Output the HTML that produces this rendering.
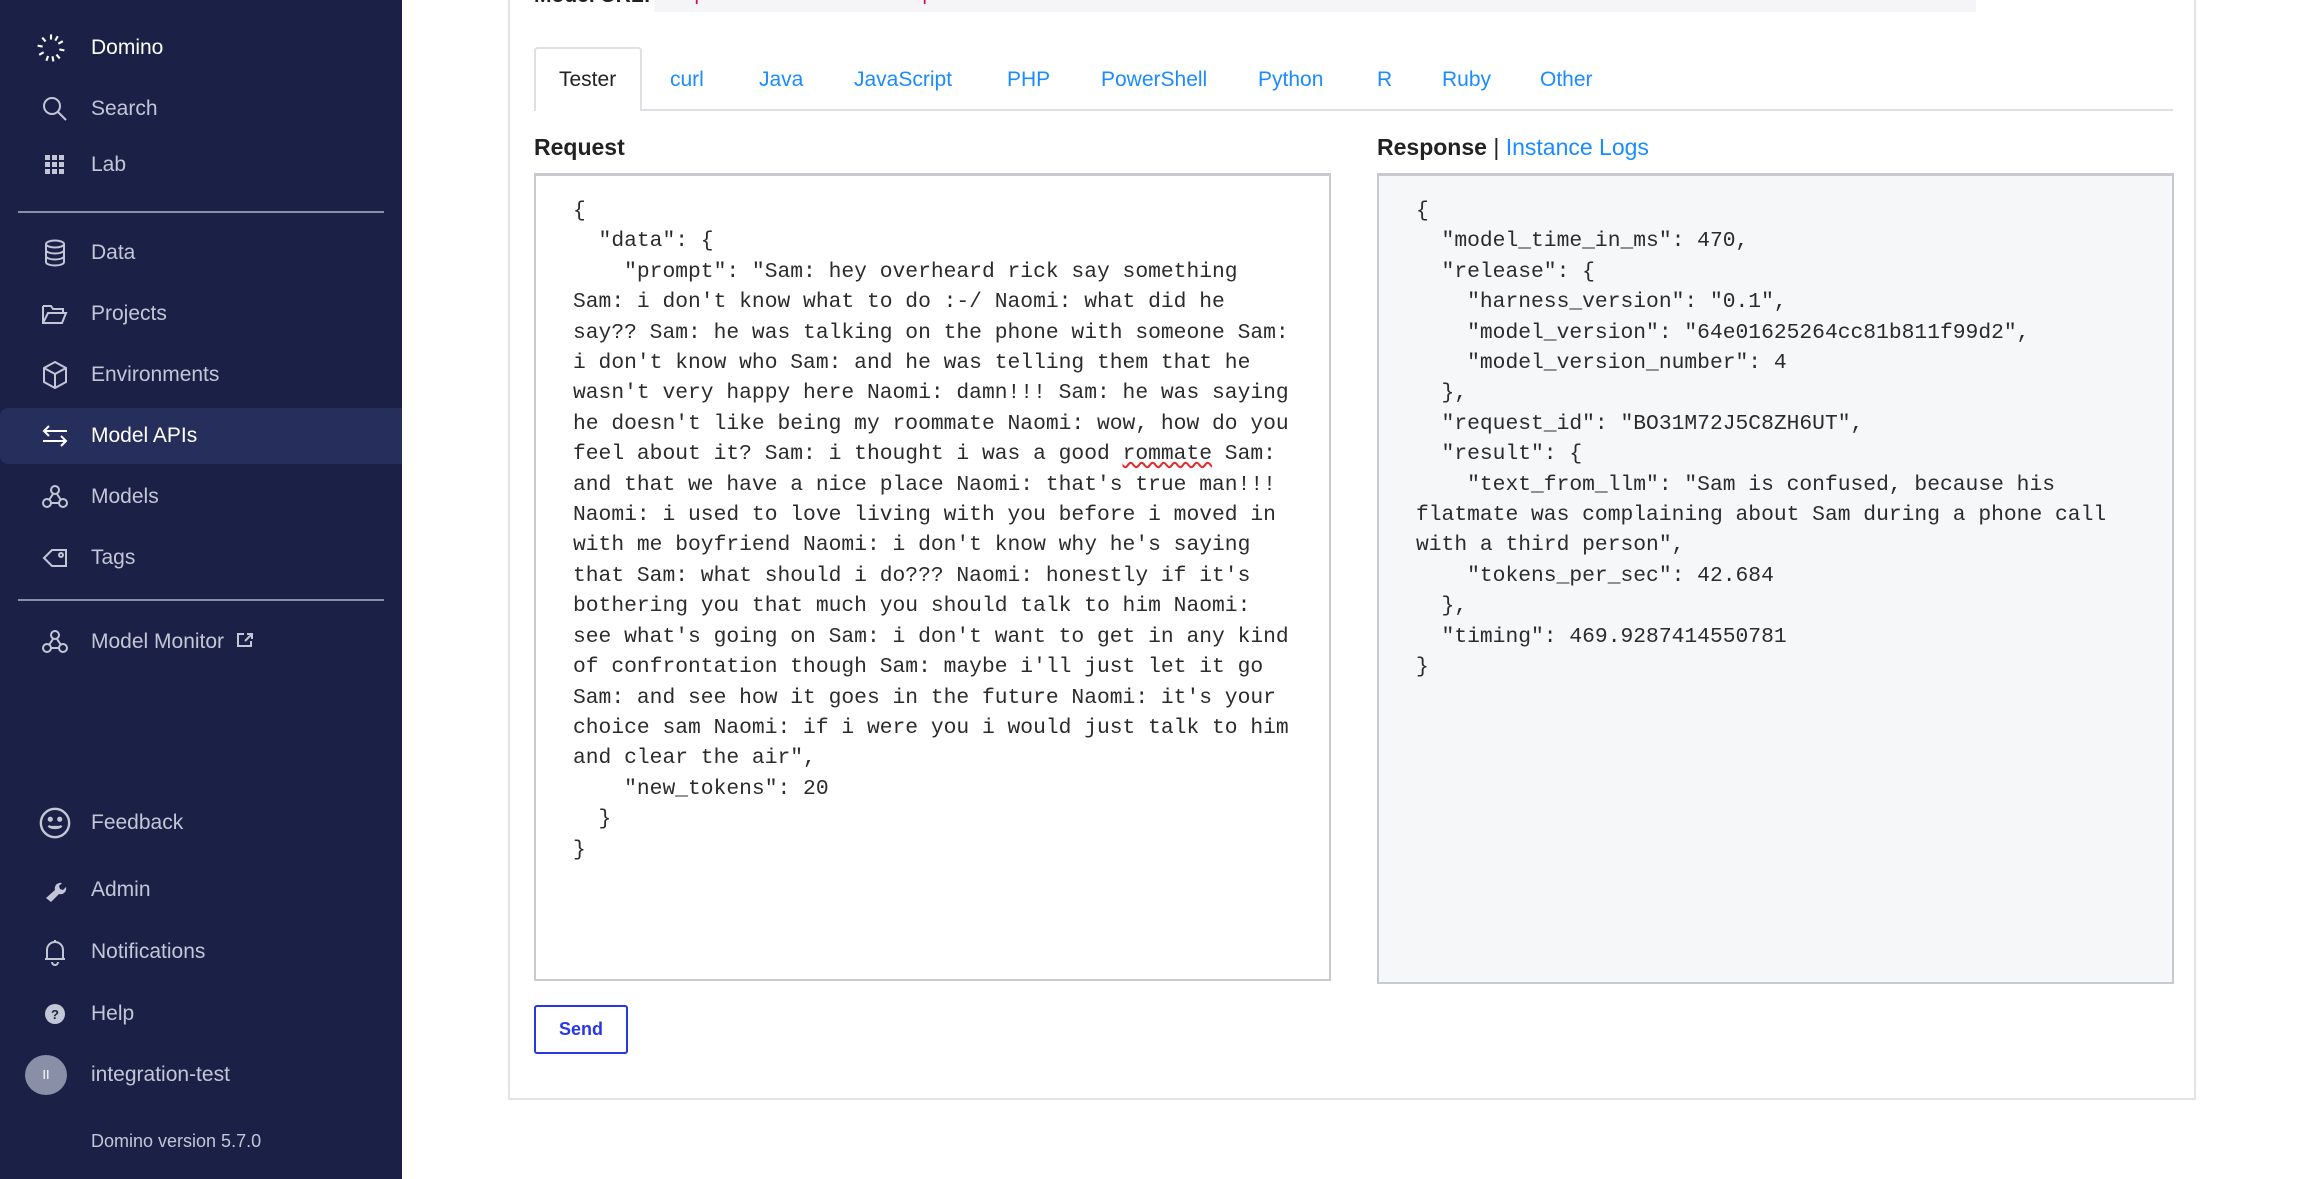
<!DOCTYPE html>
<html><head><meta charset="utf-8"><style>
*{box-sizing:border-box;margin:0;padding:0}
body{width:2304px;height:1179px;overflow:hidden;background:#fff;font-family:"Liberation Sans",sans-serif;position:relative}
#sb{position:absolute;left:0;top:0;width:402px;height:1179px;background:#1b2146}
.it{position:absolute;left:0;width:402px;height:56px;display:flex;align-items:center;color:#c3c6d6;font-size:21px}
.it .ic{position:absolute;left:38px;width:34px;height:34px;display:flex;align-items:center;justify-content:center}
.it span.t{position:absolute;left:91px}
.act{background:#262e5c;color:#fff;border-radius:8px 0 0 8px}
.div{position:absolute;left:18px;width:366px;height:2px;background:#8a8fa8}
svg{stroke:#c3c6d6;fill:none;stroke-width:2}
#card{position:absolute;left:508px;top:-10px;width:1688px;height:1110px;border:2px solid #e1e3e8;border-top:none}
.tab{position:absolute;top:78px;font-size:21px;color:#1a8cff}
pre{font-family:"Liberation Mono",monospace;font-size:21.3px;line-height:30.4px;color:#2b2b2b}
</style></head><body>
<div id="sb">
 <div class="it" style="top:20px;color:#fff;font-size:21px"><div class="ic" style="left:34px"><svg width="40" height="40" viewBox="0 0 40 40" style="stroke:#fff;stroke-width:2.5"><g transform="translate(20 20)"><path d="M0-16v6" transform="rotate(0)"/><path d="M0-16v6" transform="rotate(30)"/><path d="M0-16v6" transform="rotate(60)"/><path d="M0-16v6" transform="rotate(100)"/><path d="M0-16v6" transform="rotate(140)"/><path d="M0-16v6" transform="rotate(170)"/><path d="M0-16v6" transform="rotate(200)"/><path d="M0-16v6" transform="rotate(240)"/><path d="M0-16v6" transform="rotate(280)"/><path d="M0-16v6" transform="rotate(320)"/></g></svg></div><span class="t">Domino</span></div>
 <div class="it" style="top:81px"><div class="ic"><svg width="26" height="26" viewBox="0 0 26 26"><circle cx="10" cy="10" r="8"/><path d="M16 16l8 8"/></svg></div><span class="t">Search</span></div>
 <div class="it" style="top:137px"><div class="ic"><svg width="22" height="22" viewBox="0 0 22 22" style="fill:#c3c6d6;stroke:none"><rect x="1" y="1" width="5" height="5"/><rect x="8" y="1" width="5" height="5"/><rect x="15" y="1" width="5" height="5"/><rect x="1" y="8" width="5" height="5"/><rect x="8" y="8" width="5" height="5"/><rect x="15" y="8" width="5" height="5"/><rect x="1" y="15" width="5" height="5"/><rect x="8" y="15" width="5" height="5"/><rect x="15" y="15" width="5" height="5"/></svg></div><span class="t">Lab</span></div>
 <div class="div" style="top:211px"></div>
 <div class="it" style="top:225px"><div class="ic"><svg width="22" height="28" viewBox="0 0 22 28"><ellipse cx="11" cy="5" rx="9" ry="3.5"/><path d="M2 5v18c0 2 4 3.5 9 3.5s9-1.5 9-3.5V5M2 11c0 2 4 3.5 9 3.5s9-1.5 9-3.5M2 17c0 2 4 3.5 9 3.5s9-1.5 9-3.5"/></svg></div><span class="t">Data</span></div>
 <div class="it" style="top:286px"><div class="ic"><svg width="26" height="22" viewBox="0 0 26 22"><path d="M1 3h8l2 3h10v4M1 3v17h19l4-10H6L1 20"/></svg></div><span class="t">Projects</span></div>
 <div class="it" style="top:347px"><div class="ic"><svg width="26" height="28" viewBox="0 0 26 28"><path d="M13 1l11 6v14l-11 6-11-6V7zM2 7l11 6 11-6M13 13v14"/></svg></div><span class="t">Environments</span></div>
 <div class="it act" style="top:408px"><div class="ic"><svg width="26" height="24" viewBox="0 0 26 24" style="stroke:#fff"><path d="M25 7H2M7 2L2 7l5 5M1 17h23M19 12l5 5-5 5"/></svg></div><span class="t">Model APIs</span></div>
 <div class="it" style="top:469px"><div class="ic"><svg width="26" height="24" viewBox="0 0 26 24"><circle cx="13" cy="5" r="4"/><circle cx="5" cy="18" r="4"/><circle cx="21" cy="18" r="4"/><path d="M11 9l-4 6M15 9l4 6M9 18h8"/></svg></div><span class="t">Models</span></div>
 <div class="it" style="top:530px"><div class="ic"><svg width="26" height="20" viewBox="0 0 26 20"><path d="M2 10l8-8h14v16H10z"/><circle cx="19" cy="7" r="2"/></svg></div><span class="t">Tags</span></div>
 <div class="div" style="top:599px"></div>
 <div class="it" style="top:614px"><div class="ic"><svg width="26" height="24" viewBox="0 0 26 24"><circle cx="13" cy="5" r="4"/><circle cx="5" cy="18" r="4"/><circle cx="21" cy="18" r="4"/><path d="M11 9l-4 6M15 9l4 6M9 18h8"/></svg></div><span class="t">Model Monitor <svg width="18" height="16" viewBox="0 0 18 16" style="margin-left:6px"><path d="M8 2H2v12h13V9M11 2h5v5M16 2l-7 7"/></svg></span></div>
 <div class="it" style="top:795px"><div class="ic"><svg width="36" height="36" viewBox="0 0 36 36" style="stroke-width:2.5"><circle cx="18" cy="18" r="15"/><circle cx="13" cy="14" r="1.5" style="fill:#c3c6d6"/><circle cx="23" cy="14" r="1.5" style="fill:#c3c6d6"/><path d="M11 21c3 3 11 3 14 0" style="fill:#c3c6d6"/></svg></div><span class="t">Feedback</span></div>
 <div class="it" style="top:862px"><div class="ic"><svg width="24" height="24" viewBox="0 0 24 24" style="fill:#c3c6d6;stroke:none"><path d="M3 20l9-8c-1-4 2-8 7-7l-3 3 1 3 3 1 3-3c1 5-3 8-7 7l-8 8z"/></svg></div><span class="t">Admin</span></div>
 <div class="it" style="top:924px"><div class="ic"><svg width="24" height="28" viewBox="0 0 24 28"><path d="M4 21V12a8 8 0 0116 0v9H2h20M9 24a3 3 0 006 0M12 2v2"/></svg></div><span class="t">Notifications</span></div>
 <div class="it" style="top:986px"><div class="ic"><svg width="22" height="22" viewBox="0 0 22 22"><circle cx="11" cy="11" r="10" style="fill:#c3c6d6;stroke:none"/><text x="11" y="16" font-size="13" text-anchor="middle" fill="#1b2146" stroke="none" font-family="Liberation Sans" font-weight="bold">?</text></svg></div><span class="t">Help</span></div>
 <div class="it" style="top:1047px"><div style="position:absolute;left:25px;top:8px;width:42px;height:40px;border-radius:50%;background:#8a8fa8;color:#fff;font-size:13px;text-align:center;line-height:40px">II</div><span class="t">integration-test</span></div>
 <div style="position:absolute;left:91px;top:1131px;color:#c3c6d6;font-size:18px">Domino version 5.7.0</div>
</div>

<div id="card">
 <div style="position:absolute;left:24px;top:0;font-size:21px;font-weight:bold;color:#222;line-height:12px">Model URL:</div>
 <div style="position:absolute;left:144px;top:0;width:1322px;height:22px;background:#f5f5f7;color:#d0104c;font-family:'Liberation Mono',monospace;font-size:20px;line-height:12px;overflow:hidden;white-space:nowrap;padding-left:4px;padding-top:0">https://rev4demo12397.product-team-sandbox.domino.tech:443/models/64d12534264cc81b811f99a2/latest/model</div>
 <div style="position:absolute;left:24px;top:119px;width:1639px;height:2px;background:#dee0e4"></div>
 <div style="position:absolute;left:24px;top:57px;width:108px;height:64px;background:#fff;border:2px solid #dee0e4;border-bottom:none;border-radius:4px 4px 0 0"></div>
 <div class="tab" style="left:49px;color:#222">Tester</div>
 <div class="tab" style="left:160px">curl</div>
 <div class="tab" style="left:249px">Java</div>
 <div class="tab" style="left:344px">JavaScript</div>
 <div class="tab" style="left:497px">PHP</div>
 <div class="tab" style="left:591px">PowerShell</div>
 <div class="tab" style="left:748px">Python</div>
 <div class="tab" style="left:867px">R</div>
 <div class="tab" style="left:932px">Ruby</div>
 <div class="tab" style="left:1030px">Other</div>
 <div style="position:absolute;left:24px;top:144px;font-size:23px;font-weight:bold;color:#222">Request</div>
 <div style="position:absolute;left:867px;top:144px;font-size:23px;color:#222"><b>Response</b> | <span style="color:#1a8cff">Instance Logs</span></div>
 <div style="position:absolute;left:24px;top:183px;width:797px;height:808px;border:2px solid #c8cacf;border-top-width:3px;background:#fff">
<pre style="position:absolute;left:37px;top:20px">{
  "data": {
    "prompt": "Sam: hey overheard rick say something
Sam: i don't know what to do :-/ Naomi: what did he
say?? Sam: he was talking on the phone with someone Sam:
i don't know who Sam: and he was telling them that he
wasn't very happy here Naomi: damn!!! Sam: he was saying
he doesn't like being my roommate Naomi: wow, how do you
feel about it? Sam: i thought i was a good <span style="text-decoration:underline wavy #e03030">rommate</span> Sam:
and that we have a nice place Naomi: that's true man!!!
Naomi: i used to love living with you before i moved in
with me boyfriend Naomi: i don't know why he's saying
that Sam: what should i do??? Naomi: honestly if it's
bothering you that much you should talk to him Naomi:
see what's going on Sam: i don't want to get in any kind
of confrontation though Sam: maybe i'll just let it go
Sam: and see how it goes in the future Naomi: it's your
choice sam Naomi: if i were you i would just talk to him
and clear the air",
    "new_tokens": 20
  }
}</pre></div>
 <div style="position:absolute;left:867px;top:183px;width:797px;height:811px;border:2px solid #c8cacf;border-top-width:3px;background:#f6f7f9">
<pre style="position:absolute;left:37px;top:20px">{
  "model_time_in_ms": 470,
  "release": {
    "harness_version": "0.1",
    "model_version": "64e01625264cc81b811f99d2",
    "model_version_number": 4
  },
  "request_id": "BO31M72J5C8ZH6UT",
  "result": {
    "text_from_llm": "Sam is confused, because his
flatmate was complaining about Sam during a phone call
with a third person",
    "tokens_per_sec": 42.684
  },
  "timing": 469.9287414550781
}</pre></div>
 <div style="position:absolute;left:24px;top:1015px;width:94px;height:49px;border:2px solid #2637e8;border-radius:3px;color:#2637e8;font-size:18px;font-weight:bold;text-align:center;line-height:45px">Send</div>
</div>
</body></html>
